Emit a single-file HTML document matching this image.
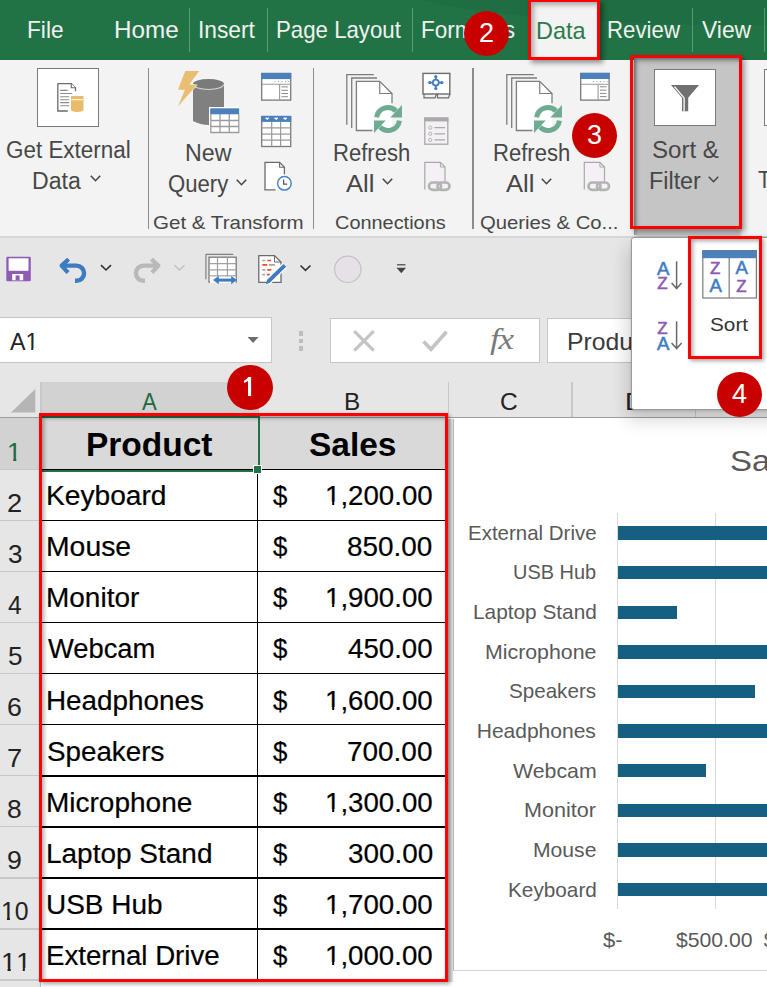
<!DOCTYPE html><html><head><meta charset="utf-8"><style>
html,body{margin:0;padding:0;}
body{width:767px;height:987px;overflow:hidden;position:relative;background:#fff;font-family:"Liberation Sans",sans-serif;}
.r{position:absolute;}
.t{position:absolute;white-space:nowrap;}
.badge{background:#c80000;border-radius:50%;}
.o1{position:relative;}
.o1::before,.o1::after{content:'';position:absolute;bottom:0.16em;height:0.16em;background:var(--bg);}
.o1::before{left:0.04em;width:0.21em;}
.o1::after{left:0.341em;width:0.2em;}
</style></head><body>
<div class="r" style="left:0px;top:59.5px;width:767px;height:177px;background:#f3f3f3;"></div>
<div class="r" style="left:0px;top:0px;width:767px;height:59.5px;background:#217346;"></div>
<div class="r" style="left:380px;top:-70px;width:700px;height:95px;border-radius:50%;background:rgba(0,0,0,.05)"></div>
<div class="t" style="left:27.08px;top:16.00px;font-size:24px;line-height:27px;color:#f1f1f1;font-family:'Liberation Sans', sans-serif;font-weight:400;transform:scaleX(0.9456);transform-origin:0 0;">File</div>
<div class="t" style="left:113.86px;top:16.00px;font-size:24px;line-height:27px;color:#f1f1f1;font-family:'Liberation Sans', sans-serif;font-weight:400;transform:scaleX(1.0105);transform-origin:0 0;">Home</div>
<div class="t" style="left:197.95px;top:16.00px;font-size:24px;line-height:27px;color:#f1f1f1;font-family:'Liberation Sans', sans-serif;font-weight:400;transform:scaleX(0.9477);transform-origin:0 0;">Insert</div>
<div class="t" style="left:275.72px;top:16.00px;font-size:24px;line-height:27px;color:#f1f1f1;font-family:'Liberation Sans', sans-serif;font-weight:400;transform:scaleX(0.9268);transform-origin:0 0;">Page Layout</div>
<div class="t" style="left:421.39px;top:16.00px;font-size:24px;line-height:27px;color:#f1f1f1;font-family:'Liberation Sans', sans-serif;font-weight:400;transform:scaleX(0.9402);transform-origin:0 0;">Formulas</div>
<div class="t" style="left:607.22px;top:16.00px;font-size:24px;line-height:27px;color:#f1f1f1;font-family:'Liberation Sans', sans-serif;font-weight:400;transform:scaleX(0.9271);transform-origin:0 0;">Review</div>
<div class="t" style="left:701.89px;top:16.00px;font-size:24px;line-height:27px;color:#f1f1f1;font-family:'Liberation Sans', sans-serif;font-weight:400;transform:scaleX(0.9518);transform-origin:0 0;">View</div>
<div class="r" style="left:188.5px;top:8px;width:1px;height:44px;background:rgba(255,255,255,0.28);"></div>
<div class="r" style="left:266.6px;top:8px;width:1px;height:44px;background:rgba(255,255,255,0.28);"></div>
<div class="r" style="left:411.9px;top:8px;width:1px;height:44px;background:rgba(255,255,255,0.28);"></div>
<div class="r" style="left:692px;top:8px;width:1px;height:44px;background:rgba(255,255,255,0.28);"></div>
<div class="r" style="left:763.6px;top:8px;width:1px;height:44px;background:rgba(255,255,255,0.28);"></div>
<div class="r" style="left:527.5px;top:0px;width:72.5px;height:60px;background:#f3f3f3;"></div>
<div class="t" style="left:535.92px;top:17.00px;font-size:24px;line-height:27px;color:#2a7a4b;font-family:'Liberation Sans', sans-serif;font-weight:400;transform:scaleX(0.9770);transform-origin:0 0;">Data</div>
<div class="r" style="left:527.5px;top:-1px;width:72.5px;height:61px;background:transparent;border:3.3px solid #ff0000;box-sizing:border-box;box-shadow:3px 3px 5px rgba(0,0,0,.4), inset 3px 3px 5px rgba(0,0,0,.3);"></div>
<div class="r" style="left:0px;top:236px;width:767px;height:1.5px;background:#d6d6d6;"></div>
<div class="r" style="left:147.7px;top:68px;width:1.3px;height:161px;background:#8c8c8c;"></div>
<div class="r" style="left:313px;top:68px;width:1.3px;height:161px;background:#8c8c8c;"></div>
<div class="r" style="left:472.3px;top:68px;width:1.3px;height:161px;background:#8c8c8c;"></div>
<div class="r" style="left:37px;top:68px;width:62px;height:59px;background:#fff;border:1.5px solid #7a7a7a;box-sizing:border-box;"></div>
<svg class="r" style="left:55px;top:82px;" width="32" height="32" viewBox="0 0 32 32"><path d="M2.8 1.6h13.5l4.2 4.2v3.5" fill="none" stroke="#6b6b6b" stroke-width="1.3"/>
<path d="M2.8 1.6v27.4h10" fill="none" stroke="#6b6b6b" stroke-width="1.3"/>
<path d="M16.3 1.6v4.2h4.2" fill="#fff" stroke="#6b6b6b" stroke-width="1.1"/>
<g stroke="#8a8a8a" stroke-width="1.1"><path d="M5.2 8.4h7.5M5.2 11.5h12M5.2 14.7h9M5.2 17.7h9M5.2 20.6h9M5.2 23.8h9"/></g>
<path d="M16 14h12.5v14.5q-6.25 3-12.5 0z" fill="#e9bc6c"/><path d="M16.5 17.7h11.5" stroke="#fff" stroke-width="1"/></svg>
<div class="t" style="left:5.88px;top:137.00px;font-size:23.5px;line-height:26px;color:#474747;font-family:'Liberation Sans', sans-serif;font-weight:400;transform:scaleX(0.9543);transform-origin:0 0;">Get External</div>
<div class="t" style="left:31.85px;top:168.00px;font-size:23.5px;line-height:26px;color:#474747;font-family:'Liberation Sans', sans-serif;font-weight:400;transform:scaleX(0.9831);transform-origin:0 0;">Data</div>
<svg class="r" style="left:88.8px;top:174.4px;" width="13" height="8.5" viewBox="0 0 13 8.5"><path d="M1.8 1.8L6.5 6.7L11.2 1.8" fill="none" stroke="#474747" stroke-width="1.6"/></svg>
<svg class="r" style="left:170px;top:65px;" width="80" height="75" viewBox="0 0 80 75"><path d="M23 19v37q15.5 8 31 0v-37z" fill="#808080"/><ellipse cx="38.5" cy="19" rx="15.5" ry="5" fill="#7a7a7a"/><path d="M23.5 19.5a15 5 0 0 0 30 0" fill="none" stroke="#d6d6d6" stroke-width="1.1"/>
<path d="M15.3 6h13.8l-9.7 13.2 7.1 1.1-18.5 21.3 6.8-16.6-6.8-.6z" fill="#e9be72" stroke="#f3f3f3" stroke-width="1.2" paint-order="stroke"/>
<rect x="39" y="42" width="31" height="26" fill="#fff"/>
<rect x="40.2" y="43.3" width="29" height="6" fill="#4a80bb"/>
<path d="M40.8 49v18.5h28v-18.5M40.8 55.5h28M40.8 61.5h28M50 49v18.5M59.3 49v18.5" fill="none" stroke="#9c9c9c" stroke-width="1.3"/></svg>
<div class="t" style="left:185.14px;top:140.00px;font-size:23.5px;line-height:26px;color:#474747;font-family:'Liberation Sans', sans-serif;font-weight:400;transform:scaleX(0.9881);transform-origin:0 0;">New</div>
<div class="t" style="left:168.10px;top:171.00px;font-size:23.5px;line-height:26px;color:#474747;font-family:'Liberation Sans', sans-serif;font-weight:400;transform:scaleX(0.9416);transform-origin:0 0;">Query</div>
<svg class="r" style="left:235.3px;top:177.6px;" width="13" height="8.5" viewBox="0 0 13 8.5"><path d="M1.8 1.8L6.5 6.7L11.2 1.8" fill="none" stroke="#474747" stroke-width="1.6"/></svg>
<svg class="r" style="left:259px;top:70px;" width="36" height="125" viewBox="0 0 36 125">
<rect x="2.7" y="3.5" width="29" height="26.6" fill="#fff" stroke="#7a7a7a" stroke-width="1.3"/>
<rect x="2.2" y="2.9" width="30" height="6.2" fill="#4a80bb"/>
<path d="M3 14.3h28.6M20.6 14.3v15.7" stroke="#9a9a9a" stroke-width="1.1"/>
<g fill="#9a9a9a"><circle cx="16" cy="11.6" r=".6"/><circle cx="19.5" cy="11.6" r=".6"/><circle cx="23" cy="11.6" r=".6"/><circle cx="26.5" cy="11.6" r=".6"/><circle cx="29.5" cy="11.6" r=".6"/></g>
<path d="M22.4 16.9h6.5M22.4 20.3h6.5M22.4 23.5h6.5M22.4 26.7h6.5" stroke="#8a8a8a" stroke-width="1"/>
<rect x="2.7" y="46.5" width="29" height="30" fill="#fff" stroke="#7a7a7a" stroke-width="1.3"/>
<rect x="2.2" y="45.9" width="30" height="6" fill="#4a80bb"/>
<path d="M6.5 48h3.4l-1.7 1.7zM15.5 48h3.4l-1.7 1.7zM24.5 48h3.4l-1.7 1.7z" fill="#fff" stroke="#fff" stroke-width=".8"/>
<path d="M3 57.9h28.6M3 64.1h28.6M3 70.2h28.6M12.7 52v24.5M21.6 52v24.5" stroke="#9a9a9a" stroke-width="1.2"/>
<path d="M6 92.4h14.6l4.8 4.8v22.6h-19.4z" fill="#fff"/><path d="M16.5 119.8h-10.5v-27.4h14.6l4.8 4.8v7" fill="none" stroke="#6b6b6b" stroke-width="1.3"/>
<path d="M20.6 92.4v4.8h4.8" fill="none" stroke="#6b6b6b" stroke-width="1.1"/>
<circle cx="25.4" cy="113.3" r="6.8" fill="#fff" stroke="#4a86c5" stroke-width="1.5"/>
<path d="M24.6 109.5v4.6h3.6" fill="none" stroke="#555" stroke-width="1.2"/>
</svg>
<div class="t" style="left:152.97px;top:212.00px;font-size:19px;line-height:21px;color:#474747;font-family:'Liberation Sans', sans-serif;font-weight:400;transform:scaleX(1.0810);transform-origin:0 0;">Get & Transform</div>
<svg class="r" style="left:340px;top:70px;" width="66" height="68" viewBox="0 0 66 68">
<path d="M6.8 54.8V4.6h27" fill="none" stroke="#7d7d7d" stroke-width="1.3"/>
<path d="M11.7 58V8h25.3" fill="none" stroke="#7d7d7d" stroke-width="1.3"/>
<path d="M16.4 60.5V11.4h23.3l12.3 12.1v37h-35.6z" fill="#fff"/>
<path d="M32.4 60.5h-16V11.4h23.3l12.3 12.1v9.8" fill="none" stroke="#7d7d7d" stroke-width="1.3"/>
<path d="M39.7 11.4v12.1h12.3" fill="none" stroke="#7d7d7d" stroke-width="1.2"/>
<circle cx="48" cy="49" r="15" fill="#fff" opacity=".0"/>
<g fill="none" stroke="#6fab92" stroke-width="5">
<path d="M36.6 47.4A11.5 11.5 0 0 1 56.1 40.9"/><path d="M59.4 50.6A11.5 11.5 0 0 1 39.9 57.1"/></g>
<path d="M62 35.1V47.4H50.3z" fill="#6fab92"/><path d="M34 62.9V50.6H45.7z" fill="#6fab92"/>
</svg>
<div class="t" style="left:333.14px;top:140.00px;font-size:23.5px;line-height:26px;color:#474747;font-family:'Liberation Sans', sans-serif;font-weight:400;transform:scaleX(0.9386);transform-origin:0 0;">Refresh</div>
<div class="t" style="left:346.40px;top:171.00px;font-size:23.5px;line-height:26px;color:#474747;font-family:'Liberation Sans', sans-serif;font-weight:400;transform:scaleX(1.0913);transform-origin:0 0;">All</div>
<svg class="r" style="left:380.6px;top:177.4px;" width="13" height="8.5" viewBox="0 0 13 8.5"><path d="M1.8 1.8L6.5 6.7L11.2 1.8" fill="none" stroke="#474747" stroke-width="1.6"/></svg>
<svg class="r" style="left:415px;top:65px;" width="45" height="135" viewBox="0 0 45 135">
<rect x="8" y="8.4" width="26.8" height="20.6" fill="#fff" stroke="#6b6b6b" stroke-width="1.4"/>
<path d="M9 29v3.8h11l1.5-3.8M22.5 29v3.8h11l1.5-3.8" fill="none" stroke="#6b6b6b" stroke-width="1.2"/>
<path d="M20.8 11.5v12.5M14.6 17.6h12.5" stroke="#3f7cc0" stroke-width="1.6"/>
<circle cx="20.8" cy="17.6" r="3" fill="#fff" stroke="#3f7cc0" stroke-width="1.8"/>
<circle cx="20.8" cy="11.7" r="1.6" fill="#3f7cc0"/><circle cx="20.8" cy="23.5" r="1.6" fill="#3f7cc0"/><circle cx="14.7" cy="17.6" r="1.6" fill="#3f7cc0"/><circle cx="26.9" cy="17.6" r="1.6" fill="#3f7cc0"/>
<rect x="9.8" y="53" width="23" height="26.2" fill="#f4f0f5" stroke="#a9a9a9" stroke-width="1.3"/>
<rect x="9.2" y="52.6" width="24.2" height="3.8" fill="#a9a9a9"/>
<path d="M19.5 62.6h10.5M19.5 68.8h10.5M19.5 74.9h10.5" stroke="#a9a9a9" stroke-width="1.2"/>
<g fill="none" stroke="#b3b3b3" stroke-width="1"><circle cx="15.3" cy="62.6" r="1.6"/><circle cx="15.3" cy="68.8" r="1.6"/><circle cx="15.3" cy="74.9" r="1.6"/></g>
<path d="M9.8 124.5V97.4h15.6l4.6 4.6v14" fill="#f4f0f5" stroke="#a9a9a9" stroke-width="1.2"/>
<path d="M25.4 97.4v4.6h4.6" fill="none" stroke="#a9a9a9" stroke-width="1"/>
<g fill="none" stroke="#b3b3b3" stroke-width="2.6"><rect x="14" y="117.5" width="12" height="7.4" rx="3.7"/><rect x="22.5" y="117.5" width="12" height="7.4" rx="3.7"/></g>
</svg>
<div class="t" style="left:335.00px;top:212.00px;font-size:19px;line-height:21px;color:#474747;font-family:'Liberation Sans', sans-serif;font-weight:400;transform:scaleX(1.0478);transform-origin:0 0;">Connections</div>
<svg class="r" style="left:499.5px;top:70px;" width="66" height="68" viewBox="0 0 66 68">
<path d="M6.8 54.8V4.6h27" fill="none" stroke="#7d7d7d" stroke-width="1.3"/>
<path d="M11.7 58V8h25.3" fill="none" stroke="#7d7d7d" stroke-width="1.3"/>
<path d="M16.4 60.5V11.4h23.3l12.3 12.1v37h-35.6z" fill="#fff"/>
<path d="M32.4 60.5h-16V11.4h23.3l12.3 12.1v9.8" fill="none" stroke="#7d7d7d" stroke-width="1.3"/>
<path d="M39.7 11.4v12.1h12.3" fill="none" stroke="#7d7d7d" stroke-width="1.2"/>
<circle cx="48" cy="49" r="15" fill="#fff" opacity=".0"/>
<g fill="none" stroke="#6fab92" stroke-width="5">
<path d="M36.6 47.4A11.5 11.5 0 0 1 56.1 40.9"/><path d="M59.4 50.6A11.5 11.5 0 0 1 39.9 57.1"/></g>
<path d="M62 35.1V47.4H50.3z" fill="#6fab92"/><path d="M34 62.9V50.6H45.7z" fill="#6fab92"/>
</svg>
<div class="t" style="left:492.64px;top:140.00px;font-size:23.5px;line-height:26px;color:#474747;font-family:'Liberation Sans', sans-serif;font-weight:400;transform:scaleX(0.9386);transform-origin:0 0;">Refresh</div>
<div class="t" style="left:505.90px;top:171.00px;font-size:23.5px;line-height:26px;color:#474747;font-family:'Liberation Sans', sans-serif;font-weight:400;transform:scaleX(1.0913);transform-origin:0 0;">All</div>
<svg class="r" style="left:540.1px;top:177.4px;" width="13" height="8.5" viewBox="0 0 13 8.5"><path d="M1.8 1.8L6.5 6.7L11.2 1.8" fill="none" stroke="#474747" stroke-width="1.6"/></svg>
<svg class="r" style="left:575px;top:65px;" width="45" height="40" viewBox="0 0 45 40">
<rect x="5.7" y="8.5" width="28.4" height="26.6" fill="#fff" stroke="#7a7a7a" stroke-width="1.3"/>
<rect x="5.2" y="7.8" width="29.4" height="6.2" fill="#4a80bb"/>
<path d="M6 19.2h27.6M23.1 19.2v15.7" stroke="#9a9a9a" stroke-width="1.1"/>
<g fill="#9a9a9a"><circle cx="18.5" cy="16.6" r=".6"/><circle cx="22" cy="16.6" r=".6"/><circle cx="25.5" cy="16.6" r=".6"/><circle cx="29" cy="16.6" r=".6"/><circle cx="32" cy="16.6" r=".6"/></g>
<path d="M25 21.8h6.5M25 25.2h6.5M25 28.4h6.5M25 31.6h6.5" stroke="#8a8a8a" stroke-width="1"/></svg>
<svg class="r" style="left:575px;top:155px;" width="45" height="45" viewBox="0 0 45 45">
<path d="M9.3 34.5V7.4h15.6l4.6 4.6v14" fill="#f4f0f5" stroke="#a9a9a9" stroke-width="1.2"/>
<path d="M24.9 7.4v4.6h4.6" fill="none" stroke="#a9a9a9" stroke-width="1"/>
<g fill="none" stroke="#b3b3b3" stroke-width="2.6"><rect x="13.5" y="27.5" width="12" height="7.4" rx="3.7"/><rect x="22" y="27.5" width="12" height="7.4" rx="3.7"/></g></svg>
<div class="t" style="left:480.09px;top:212.00px;font-size:19px;line-height:21px;color:#474747;font-family:'Liberation Sans', sans-serif;font-weight:400;transform:scaleX(1.0660);transform-origin:0 0;">Queries & Co...</div>
<div class="r" style="left:633.5px;top:57px;width:105px;height:178px;background:#c5c5c5;box-shadow:inset 2px 2px 3px rgba(0,0,0,0.25), 2px 2px 3px rgba(0,0,0,0.2);"></div>
<div class="r" style="left:654.4px;top:68.7px;width:61.4px;height:57.7px;background:#fff;border:1.5px solid #7a7a7a;box-sizing:border-box;"></div>
<svg class="r" style="left:665px;top:80px;" width="40" height="36" viewBox="0 0 40 36"><path d="M6 5h28l-10.8 12.7v13.5h-6.2v-13.5z" fill="#707070"/><path d="M9.5 6.6l9.6 11.3v13.3" fill="none" stroke="#fff" stroke-width="1.3"/></svg>
<div class="t" style="left:652.42px;top:137.00px;font-size:23.5px;line-height:26px;color:#474747;font-family:'Liberation Sans', sans-serif;font-weight:400;transform:scaleX(1.0250);transform-origin:0 0;">Sort &amp;</div>
<div class="t" style="left:648.93px;top:168.00px;font-size:23.5px;line-height:26px;color:#474747;font-family:'Liberation Sans', sans-serif;font-weight:400;transform:scaleX(0.9932);transform-origin:0 0;">Filter</div>
<svg class="r" style="left:707px;top:175px;" width="13" height="8.5" viewBox="0 0 13 8.5"><path d="M1.8 1.8L6.5 6.7L11.2 1.8" fill="none" stroke="#474747" stroke-width="1.6"/></svg>
<div class="r" style="left:629.5px;top:54.5px;width:112px;height:174px;background:transparent;border:3.6px solid #ff0000;box-sizing:border-box;box-shadow:3px 3px 5px rgba(0,0,0,.35), inset 3px 3px 5px rgba(0,0,0,.3);"></div>
<div class="r" style="left:764px;top:68.7px;width:10px;height:57.7px;background:#fff;border:1.5px solid #7a7a7a;box-sizing:border-box;"></div>
<div class="t" style="left:757.58px;top:167.00px;font-size:23.5px;line-height:26px;color:#474747;font-family:'Liberation Sans', sans-serif;font-weight:400;transform:scaleX(0.8959);transform-origin:0 0;">T</div>
<div class="r" style="left:0px;top:237.5px;width:767px;height:145px;background:#e6e6e6;"></div>
<svg class="r" style="left:0px;top:248px;" width="420" height="45" viewBox="0 0 420 45">
<rect x="6.3" y="8.7" width="24.5" height="24.6" rx="1.2" fill="#8e5bb5"/>
<rect x="8.6" y="10.3" width="19.9" height="12.5" fill="#fff"/>
<rect x="12.2" y="26" width="11" height="6.3" fill="#fff"/><rect x="15.6" y="27.4" width="4" height="5" fill="#8e5bb5"/>
<path d="M61.5 17.6H76.5A7.6 7.6 0 0 1 76.5 32.8H75" fill="none" stroke="#3d7cc0" stroke-width="4.4"/>
<path d="M68.6 11.2L61.6 17.6L68 24.6" fill="none" stroke="#3d7cc0" stroke-width="4.2" stroke-linejoin="round"/>
<path d="M101 17.2l5 4.8 5-4.8" fill="none" stroke="#333" stroke-width="1.6"/>
<path d="M158.5 17.6H143.5A7.6 7.6 0 0 0 143.5 32.8H145" fill="none" stroke="#b9b9b9" stroke-width="4.4"/>
<path d="M151.4 11.2L158.4 17.6L152 24.6" fill="none" stroke="#b9b9b9" stroke-width="4.2" stroke-linejoin="round"/>
<path d="M174.5 17.2l5 4.8 5-4.8" fill="none" stroke="#c0c0c0" stroke-width="1.4"/>
<path d="M205.9 6.3H233.2M205.9 6.3V31.3" fill="none" stroke="#808080" stroke-width="1.2"/>
<rect x="209" y="9.2" width="27.2" height="24.9" fill="#fff" stroke="#7a7a7a" stroke-width="1.3"/>
<path d="M217.5 9.5v24.5M227.4 9.5v24.5M209.5 15.6h26.3M209.5 21.9h26.3M209.5 27.9h26.3" stroke="#a0a0a0" stroke-width="1.2"/>
<rect x="210" y="28.8" width="25.5" height="6.2" fill="#fff"/>
<path d="M217 32.1H233" stroke="#3d7cc0" stroke-width="3"/>
<path d="M213 32.1l5.8-4.2v8.4zM237 32.1l-5.8-4.2v8.4z" fill="#3d7cc0"/>
<path d="M258.8 7.6H274.5L281 14V34.3H258.8Z" fill="#fff" stroke="#6b6b6b" stroke-width="1.3"/>
<path d="M274.5 7.6V14H281" fill="none" stroke="#6b6b6b" stroke-width="1"/>
<g stroke-width="1.6"><path d="M262.3 12.5h3M262.3 21.9h3M262.3 26.6h2.6M269 16.9h6" stroke="#a6a6a6"/><path d="M267.3 12.5h3.8M262.3 16.9h5M267.3 21.9h4M266.8 26.6h3" stroke="#e0532a"/></g>
<path d="M267.2 34.6L284.8 17.4" stroke="#fff" stroke-width="6.4"/>
<path d="M268.4 33.4L284.8 17.4" stroke="#3d7cc0" stroke-width="4"/>
<path d="M266 36l1-4.6 3.4 3.4z" fill="#3d7cc0"/>
<path d="M300.5 17.5l5 4.8 5-4.8" fill="none" stroke="#333" stroke-width="1.6"/>
<circle cx="347.8" cy="21.3" r="13.2" fill="#e5e1e6" stroke="#c4c4c4" stroke-width="1.2"/>
<path d="M397 16.8h8.5" stroke="#444" stroke-width="1.2"/><path d="M396.5 19.8h9.5l-4.75 5.5z" fill="#444"/>
</svg>
<div class="r" style="left:0px;top:317.2px;width:272px;height:45.4px;background:#fff;border:1.2px solid #c6c6c6;border-left:none;box-sizing:border-box;"></div>
<div class="t" style="left:10.00px;top:329.00px;font-size:23px;line-height:26px;color:#222;font-family:'Liberation Sans', sans-serif;font-weight:400;transform:scaleX(1.0102);transform-origin:0 0;">A<span class="o1" style="--bg:#fff">1</span></div>
<svg class="r" style="left:245px;top:334px;" width="16" height="12" viewBox="0 0 16 12"><path d="M2.6 3h11l-5.5 6z" fill="#6d6d6d"/></svg>
<div class="r" style="left:298.6px;top:331px;width:4.6px;height:4.6px;background:#bdbdbd;"></div>
<div class="r" style="left:298.6px;top:338.5px;width:4.6px;height:4.6px;background:#bdbdbd;"></div>
<div class="r" style="left:298.6px;top:346px;width:4.6px;height:4.6px;background:#bdbdbd;"></div>
<div class="r" style="left:329.9px;top:317.5px;width:210.5px;height:45px;background:#fff;border:1.2px solid #c6c6c6;box-sizing:border-box;"></div>
<svg class="r" style="left:350px;top:327px;" width="30" height="27" viewBox="0 0 30 27"><path d="M4.2 4.2l19.5 19.5M23.7 4.2l-19.5 19.5" stroke="#c4c4c4" stroke-width="3.2"/></svg>
<svg class="r" style="left:420px;top:327px;" width="30" height="27" viewBox="0 0 30 27"><path d="M3.5 14.5l7.5 7.8 15.5-17.5" fill="none" stroke="#c4c4c4" stroke-width="3.6"/></svg>
<div class="t" style="left:490.05px;top:323.00px;font-size:29px;line-height:32px;color:#7a7a7a;font-family:'Liberation Serif', serif;font-weight:400;font-style:italic;transform:scaleX(1.2032);transform-origin:0 0;letter-spacing:-1px;">fx</div>
<div class="r" style="left:546.6px;top:318px;width:230px;height:45px;background:#fff;border:1.2px solid #c6c6c6;box-sizing:border-box;"></div>
<div class="t" style="left:566.72px;top:328.00px;font-size:24px;line-height:27px;color:#3a3a3a;font-family:'Liberation Sans', sans-serif;font-weight:400;transform:scaleX(1.0301);transform-origin:0 0;">Produ</div>
<div class="r" style="left:0px;top:382.4px;width:767px;height:35.6px;background:#e6e6e6;"></div>
<div class="r" style="left:41px;top:382.4px;width:217px;height:35.6px;background:#d2d2d2;"></div>
<svg class="r" style="left:0px;top:382px;" width="41" height="36" viewBox="0 0 41 36"><path d="M35.3 7v23.6H11z" fill="#b5b5b5"/></svg>
<div class="r" style="left:0px;top:417px;width:767px;height:1.4px;background:#9e9e9e;"></div>
<div class="r" style="left:40.4px;top:382.4px;width:1.2px;height:35px;background:#c8c8c8;"></div>
<div class="r" style="left:257.6px;top:382.4px;width:1.2px;height:35px;background:#c8c8c8;"></div>
<div class="r" style="left:447.6px;top:382.4px;width:1.2px;height:35px;background:#c8c8c8;"></div>
<div class="r" style="left:571.4px;top:382.4px;width:1.2px;height:35px;background:#c8c8c8;"></div>
<div class="r" style="left:695px;top:382.4px;width:1.2px;height:35px;background:#c8c8c8;"></div>
<div class="t" style="left:142.30px;top:389.00px;font-size:23px;line-height:26px;color:#1e6b41;font-family:'Liberation Sans', sans-serif;font-weight:400;transform:scaleX(0.9611);transform-origin:0 0;">A</div>
<div class="t" style="left:344.26px;top:389.00px;font-size:23px;line-height:26px;color:#222;font-family:'Liberation Sans', sans-serif;font-weight:400;transform:scaleX(1.0565);transform-origin:0 0;">B</div>
<div class="t" style="left:500.37px;top:389.00px;font-size:23px;line-height:26px;color:#222;font-family:'Liberation Sans', sans-serif;font-weight:400;transform:scaleX(1.0681);transform-origin:0 0;">C</div>
<div class="t" style="left:624.55px;top:389.00px;font-size:23px;line-height:26px;color:#222;font-family:'Liberation Sans', sans-serif;font-weight:400;transform:scaleX(1.1692);transform-origin:0 0;">D</div>
<div class="r" style="left:0px;top:418.4px;width:40.4px;height:569px;background:#e6e6e6;"></div>
<div class="r" style="left:0px;top:418.4px;width:40.4px;height:51.06px;background:#d2d2d2;"></div>
<div class="r" style="left:40.4px;top:418.4px;width:218px;height:569px;background:#fff;"></div>
<div class="r" style="left:258px;top:418.4px;width:190px;height:569px;background:#fff;"></div>
<div class="r" style="left:447px;top:418.4px;width:320px;height:569px;background:#fff;"></div>
<div class="r" style="left:39.6px;top:418.4px;width:1.2px;height:569px;background:#bcbcbc;"></div>
<div class="r" style="left:0px;top:468.85999999999996px;width:40.4px;height:1.2px;background:#c8c8c8;"></div>
<div class="r" style="left:0px;top:519.92px;width:40.4px;height:1.2px;background:#c8c8c8;"></div>
<div class="r" style="left:0px;top:570.9799999999999px;width:40.4px;height:1.2px;background:#c8c8c8;"></div>
<div class="r" style="left:0px;top:622.04px;width:40.4px;height:1.2px;background:#c8c8c8;"></div>
<div class="r" style="left:0px;top:673.1px;width:40.4px;height:1.2px;background:#c8c8c8;"></div>
<div class="r" style="left:0px;top:724.16px;width:40.4px;height:1.2px;background:#c8c8c8;"></div>
<div class="r" style="left:0px;top:775.2199999999999px;width:40.4px;height:1.2px;background:#c8c8c8;"></div>
<div class="r" style="left:0px;top:826.28px;width:40.4px;height:1.2px;background:#c8c8c8;"></div>
<div class="r" style="left:0px;top:877.34px;width:40.4px;height:1.2px;background:#c8c8c8;"></div>
<div class="r" style="left:0px;top:928.4px;width:40.4px;height:1.2px;background:#c8c8c8;"></div>
<div class="r" style="left:0px;top:979.46px;width:40.4px;height:1.2px;background:#c8c8c8;"></div>
<div class="r" style="left:41px;top:418.4px;width:404px;height:51.06px;background:#d9d9d9;"></div>
<div class="t" style="left:7.25px;top:438.00px;font-size:25px;line-height:28px;color:#1e6b41;font-family:'Liberation Sans', sans-serif;font-weight:400;transform:scaleX(1.0391);transform-origin:0 0;"><span class="o1" style="--bg:#d2d2d2">1</span></div>
<div class="t" style="left:7.24px;top:489.00px;font-size:25px;line-height:28px;color:#222;font-family:'Liberation Sans', sans-serif;font-weight:400;transform:scaleX(1.0901);transform-origin:0 0;">2</div>
<div class="t" style="left:7.56px;top:540.00px;font-size:25px;line-height:28px;color:#222;font-family:'Liberation Sans', sans-serif;font-weight:400;transform:scaleX(1.0442);transform-origin:0 0;">3</div>
<div class="t" style="left:8.11px;top:591.00px;font-size:25px;line-height:28px;color:#222;font-family:'Liberation Sans', sans-serif;font-weight:400;transform:scaleX(0.9822);transform-origin:0 0;">4</div>
<div class="t" style="left:7.56px;top:642.00px;font-size:25px;line-height:28px;color:#222;font-family:'Liberation Sans', sans-serif;font-weight:400;transform:scaleX(1.0442);transform-origin:0 0;">5</div>
<div class="t" style="left:7.27px;top:693.00px;font-size:25px;line-height:28px;color:#222;font-family:'Liberation Sans', sans-serif;font-weight:400;transform:scaleX(1.0667);transform-origin:0 0;">6</div>
<div class="t" style="left:7.24px;top:744.00px;font-size:25px;line-height:28px;color:#222;font-family:'Liberation Sans', sans-serif;font-weight:400;transform:scaleX(1.0901);transform-origin:0 0;">7</div>
<div class="t" style="left:7.41px;top:795.00px;font-size:25px;line-height:28px;color:#222;font-family:'Liberation Sans', sans-serif;font-weight:400;transform:scaleX(1.0553);transform-origin:0 0;">8</div>
<div class="t" style="left:7.40px;top:846.00px;font-size:25px;line-height:28px;color:#222;font-family:'Liberation Sans', sans-serif;font-weight:400;transform:scaleX(1.0667);transform-origin:0 0;">9</div>
<div class="t" style="left:1.34px;top:897.00px;font-size:25px;line-height:28px;color:#222;font-family:'Liberation Sans', sans-serif;font-weight:400;transform:scaleX(0.9920);transform-origin:0 0;"><span class="o1" style="--bg:#e6e6e6">1</span>0</div>
<div class="t" style="left:1.17px;top:948.00px;font-size:25px;line-height:28px;color:#222;font-family:'Liberation Sans', sans-serif;font-weight:400;transform:scaleX(1.0842);transform-origin:0 0;"><span class="o1" style="--bg:#e6e6e6">1</span><span class="o1" style="--bg:#e6e6e6">1</span></div>
<div class="r" style="left:41px;top:468.76px;width:404px;height:1.4px;background:#000;"></div>
<div class="r" style="left:41px;top:519.8199999999999px;width:404px;height:1.4px;background:#000;"></div>
<div class="r" style="left:41px;top:570.8799999999999px;width:404px;height:1.4px;background:#000;"></div>
<div class="r" style="left:41px;top:621.9399999999999px;width:404px;height:1.4px;background:#000;"></div>
<div class="r" style="left:41px;top:673.0px;width:404px;height:1.4px;background:#000;"></div>
<div class="r" style="left:41px;top:724.06px;width:404px;height:1.4px;background:#000;"></div>
<div class="r" style="left:41px;top:775.1199999999999px;width:404px;height:1.4px;background:#000;"></div>
<div class="r" style="left:41px;top:826.18px;width:404px;height:1.4px;background:#000;"></div>
<div class="r" style="left:41px;top:877.24px;width:404px;height:1.4px;background:#000;"></div>
<div class="r" style="left:41px;top:928.3px;width:404px;height:1.4px;background:#000;"></div>
<div class="r" style="left:256.8px;top:469.46px;width:1.5px;height:510.6px;background:#000;"></div>
<div class="t" style="left:86.03px;top:426.00px;font-size:33px;line-height:37px;color:#000;font-family:'Liberation Sans', sans-serif;font-weight:700;transform:scaleX(1.0139);transform-origin:0 0;">Product</div>
<div class="t" style="left:309.30px;top:426.00px;font-size:33px;line-height:37px;color:#000;font-family:'Liberation Sans', sans-serif;font-weight:700;transform:scaleX(1.0141);transform-origin:0 0;">Sales</div>
<div class="t" style="left:45.65px;top:481.00px;font-size:27px;line-height:30px;color:#000;font-family:'Liberation Sans', sans-serif;font-weight:400;transform:scaleX(1.0426);transform-origin:0 0;-webkit-text-stroke:0.2px #000;">Keyboard</div>
<div class="t" style="left:272.84px;top:481.00px;font-size:27px;line-height:30px;color:#000;font-family:'Liberation Sans', sans-serif;font-weight:400;transform:scaleX(0.9574);transform-origin:0 0;-webkit-text-stroke:0.2px #000;">$</div>
<div class="t" style="left:325.12px;top:481.00px;font-size:27px;line-height:30px;color:#000;font-family:'Liberation Sans', sans-serif;font-weight:400;transform:scaleX(1.0249);transform-origin:0 0;-webkit-text-stroke:0.2px #000;"><span class="o1" style="--bg:#fff">1</span>,200.00</div>
<div class="t" style="left:45.63px;top:532.00px;font-size:27px;line-height:30px;color:#000;font-family:'Liberation Sans', sans-serif;font-weight:400;transform:scaleX(1.0499);transform-origin:0 0;-webkit-text-stroke:0.2px #000;">Mouse</div>
<div class="t" style="left:272.84px;top:532.00px;font-size:27px;line-height:30px;color:#000;font-family:'Liberation Sans', sans-serif;font-weight:400;transform:scaleX(0.9574);transform-origin:0 0;-webkit-text-stroke:0.2px #000;">$</div>
<div class="t" style="left:347.45px;top:532.00px;font-size:27px;line-height:30px;color:#000;font-family:'Liberation Sans', sans-serif;font-weight:400;transform:scaleX(1.0328);transform-origin:0 0;-webkit-text-stroke:0.2px #000;">850.00</div>
<div class="t" style="left:45.66px;top:583.00px;font-size:27px;line-height:30px;color:#000;font-family:'Liberation Sans', sans-serif;font-weight:400;transform:scaleX(1.0361);transform-origin:0 0;-webkit-text-stroke:0.2px #000;">Monitor</div>
<div class="t" style="left:272.84px;top:583.00px;font-size:27px;line-height:30px;color:#000;font-family:'Liberation Sans', sans-serif;font-weight:400;transform:scaleX(0.9574);transform-origin:0 0;-webkit-text-stroke:0.2px #000;">$</div>
<div class="t" style="left:325.12px;top:583.00px;font-size:27px;line-height:30px;color:#000;font-family:'Liberation Sans', sans-serif;font-weight:400;transform:scaleX(1.0249);transform-origin:0 0;-webkit-text-stroke:0.2px #000;"><span class="o1" style="--bg:#fff">1</span>,900.00</div>
<div class="t" style="left:47.76px;top:634.00px;font-size:27px;line-height:30px;color:#000;font-family:'Liberation Sans', sans-serif;font-weight:400;transform:scaleX(1.0123);transform-origin:0 0;-webkit-text-stroke:0.2px #000;">Webcam</div>
<div class="t" style="left:272.84px;top:634.00px;font-size:27px;line-height:30px;color:#000;font-family:'Liberation Sans', sans-serif;font-weight:400;transform:scaleX(0.9574);transform-origin:0 0;-webkit-text-stroke:0.2px #000;">$</div>
<div class="t" style="left:348.15px;top:634.00px;font-size:27px;line-height:30px;color:#000;font-family:'Liberation Sans', sans-serif;font-weight:400;transform:scaleX(1.0242);transform-origin:0 0;-webkit-text-stroke:0.2px #000;">450.00</div>
<div class="t" style="left:45.67px;top:686.00px;font-size:27px;line-height:30px;color:#000;font-family:'Liberation Sans', sans-serif;font-weight:400;transform:scaleX(1.0314);transform-origin:0 0;-webkit-text-stroke:0.2px #000;">Headphones</div>
<div class="t" style="left:272.84px;top:686.00px;font-size:27px;line-height:30px;color:#000;font-family:'Liberation Sans', sans-serif;font-weight:400;transform:scaleX(0.9574);transform-origin:0 0;-webkit-text-stroke:0.2px #000;">$</div>
<div class="t" style="left:325.12px;top:686.00px;font-size:27px;line-height:30px;color:#000;font-family:'Liberation Sans', sans-serif;font-weight:400;transform:scaleX(1.0249);transform-origin:0 0;-webkit-text-stroke:0.2px #000;"><span class="o1" style="--bg:#fff">1</span>,600.00</div>
<div class="t" style="left:46.65px;top:737.00px;font-size:27px;line-height:30px;color:#000;font-family:'Liberation Sans', sans-serif;font-weight:400;transform:scaleX(1.0285);transform-origin:0 0;-webkit-text-stroke:0.2px #000;">Speakers</div>
<div class="t" style="left:272.84px;top:737.00px;font-size:27px;line-height:30px;color:#000;font-family:'Liberation Sans', sans-serif;font-weight:400;transform:scaleX(0.9574);transform-origin:0 0;-webkit-text-stroke:0.2px #000;">$</div>
<div class="t" style="left:347.30px;top:737.00px;font-size:27px;line-height:30px;color:#000;font-family:'Liberation Sans', sans-serif;font-weight:400;transform:scaleX(1.0345);transform-origin:0 0;-webkit-text-stroke:0.2px #000;">700.00</div>
<div class="t" style="left:45.66px;top:788.00px;font-size:27px;line-height:30px;color:#000;font-family:'Liberation Sans', sans-serif;font-weight:400;transform:scaleX(1.0370);transform-origin:0 0;-webkit-text-stroke:0.2px #000;">Microphone</div>
<div class="t" style="left:272.84px;top:788.00px;font-size:27px;line-height:30px;color:#000;font-family:'Liberation Sans', sans-serif;font-weight:400;transform:scaleX(0.9574);transform-origin:0 0;-webkit-text-stroke:0.2px #000;">$</div>
<div class="t" style="left:325.12px;top:788.00px;font-size:27px;line-height:30px;color:#000;font-family:'Liberation Sans', sans-serif;font-weight:400;transform:scaleX(1.0249);transform-origin:0 0;-webkit-text-stroke:0.2px #000;"><span class="o1" style="--bg:#fff">1</span>,300.00</div>
<div class="t" style="left:45.66px;top:839.00px;font-size:27px;line-height:30px;color:#000;font-family:'Liberation Sans', sans-serif;font-weight:400;transform:scaleX(1.0361);transform-origin:0 0;-webkit-text-stroke:0.2px #000;">Laptop Stand</div>
<div class="t" style="left:272.84px;top:839.00px;font-size:27px;line-height:30px;color:#000;font-family:'Liberation Sans', sans-serif;font-weight:400;transform:scaleX(0.9574);transform-origin:0 0;-webkit-text-stroke:0.2px #000;">$</div>
<div class="t" style="left:347.59px;top:839.00px;font-size:27px;line-height:30px;color:#000;font-family:'Liberation Sans', sans-serif;font-weight:400;transform:scaleX(1.0311);transform-origin:0 0;-webkit-text-stroke:0.2px #000;">300.00</div>
<div class="t" style="left:45.80px;top:890.00px;font-size:27px;line-height:30px;color:#000;font-family:'Liberation Sans', sans-serif;font-weight:400;transform:scaleX(1.0361);transform-origin:0 0;-webkit-text-stroke:0.2px #000;">USB Hub</div>
<div class="t" style="left:272.84px;top:890.00px;font-size:27px;line-height:30px;color:#000;font-family:'Liberation Sans', sans-serif;font-weight:400;transform:scaleX(0.9574);transform-origin:0 0;-webkit-text-stroke:0.2px #000;">$</div>
<div class="t" style="left:325.12px;top:890.00px;font-size:27px;line-height:30px;color:#000;font-family:'Liberation Sans', sans-serif;font-weight:400;transform:scaleX(1.0249);transform-origin:0 0;-webkit-text-stroke:0.2px #000;"><span class="o1" style="--bg:#fff">1</span>,700.00</div>
<div class="t" style="left:45.69px;top:941.00px;font-size:27px;line-height:30px;color:#000;font-family:'Liberation Sans', sans-serif;font-weight:400;transform:scaleX(1.0242);transform-origin:0 0;-webkit-text-stroke:0.2px #000;">External Drive</div>
<div class="t" style="left:272.84px;top:941.00px;font-size:27px;line-height:30px;color:#000;font-family:'Liberation Sans', sans-serif;font-weight:400;transform:scaleX(0.9574);transform-origin:0 0;-webkit-text-stroke:0.2px #000;">$</div>
<div class="t" style="left:325.12px;top:941.00px;font-size:27px;line-height:30px;color:#000;font-family:'Liberation Sans', sans-serif;font-weight:400;transform:scaleX(1.0249);transform-origin:0 0;-webkit-text-stroke:0.2px #000;"><span class="o1" style="--bg:#fff">1</span>,000.00</div>
<div class="r" style="left:39.5px;top:416.2px;width:220.5px;height:55.5px;background:transparent;border:2.8px solid #217346;box-sizing:border-box;"></div>
<div class="r" style="left:252.7px;top:464.7px;width:7.5px;height:7.3px;background:#217346;border:1px solid #fff;box-sizing:content-box;"></div>
<div class="r" style="left:453px;top:418.6px;width:320px;height:552px;background:#fff;border-left:1px solid #b8b8b8;border-bottom:1.2px solid #d4d4d4;box-sizing:border-box;"></div>
<div class="r" style="left:448.4px;top:418.6px;width:4.8px;height:563px;background:linear-gradient(90deg,rgba(0,0,0,.22),rgba(0,0,0,.1));"></div>
<div class="t" style="left:729.82px;top:444.00px;font-size:30px;line-height:33px;color:#595959;font-family:'Liberation Sans', sans-serif;font-weight:400;transform:scaleX(1.0979);transform-origin:0 0;">Sa</div>
<div class="r" style="left:617.3px;top:512.8px;width:1.1px;height:396.5px;background:#d9d9d9;"></div>
<div class="r" style="left:714.9px;top:512.8px;width:1.1px;height:396.5px;background:#d9d9d9;"></div>
<div class="r" style="left:618.4px;top:526.3px;width:194.8px;height:13.6px;background:#156082;"></div>
<div class="t" style="left:467.76px;top:521.00px;font-size:21px;line-height:23px;color:#595959;font-family:'Liberation Sans', sans-serif;font-weight:400;transform:scaleX(0.9748);transform-origin:0 0;">External Drive</div>
<div class="r" style="left:618.4px;top:565.9px;width:331.16px;height:13.6px;background:#156082;"></div>
<div class="t" style="left:513.21px;top:560.00px;font-size:21px;line-height:23px;color:#595959;font-family:'Liberation Sans', sans-serif;font-weight:400;transform:scaleX(0.9489);transform-origin:0 0;">USB Hub</div>
<div class="r" style="left:618.4px;top:605.5px;width:58.44px;height:13.6px;background:#156082;"></div>
<div class="t" style="left:472.94px;top:600.00px;font-size:21px;line-height:23px;color:#595959;font-family:'Liberation Sans', sans-serif;font-weight:400;transform:scaleX(0.9909);transform-origin:0 0;">Laptop Stand</div>
<div class="r" style="left:618.4px;top:645.0999999999999px;width:253.24px;height:13.6px;background:#156082;"></div>
<div class="t" style="left:484.99px;top:640.00px;font-size:21px;line-height:23px;color:#595959;font-family:'Liberation Sans', sans-serif;font-weight:400;transform:scaleX(1.0149);transform-origin:0 0;">Microphone</div>
<div class="r" style="left:618.4px;top:684.6999999999999px;width:136.36px;height:13.6px;background:#156082;"></div>
<div class="t" style="left:509.07px;top:679.00px;font-size:21px;line-height:23px;color:#595959;font-family:'Liberation Sans', sans-serif;font-weight:400;transform:scaleX(0.9811);transform-origin:0 0;">Speakers</div>
<div class="r" style="left:618.4px;top:724.3px;width:311.68px;height:13.6px;background:#156082;"></div>
<div class="t" style="left:476.72px;top:719.00px;font-size:21px;line-height:23px;color:#595959;font-family:'Liberation Sans', sans-serif;font-weight:400;">Headphones</div>
<div class="r" style="left:618.4px;top:763.9px;width:87.66px;height:13.6px;background:#156082;"></div>
<div class="t" style="left:513.09px;top:759.00px;font-size:21px;line-height:23px;color:#595959;font-family:'Liberation Sans', sans-serif;font-weight:400;transform:scaleX(1.0141);transform-origin:0 0;">Webcam</div>
<div class="r" style="left:618.4px;top:803.5px;width:370.12px;height:13.6px;background:#156082;"></div>
<div class="t" style="left:523.98px;top:798.00px;font-size:21px;line-height:23px;color:#595959;font-family:'Liberation Sans', sans-serif;font-weight:400;transform:scaleX(1.0260);transform-origin:0 0;">Monitor</div>
<div class="r" style="left:618.4px;top:843.0999999999999px;width:165.58px;height:13.6px;background:#156082;"></div>
<div class="t" style="left:533.01px;top:838.00px;font-size:21px;line-height:23px;color:#595959;font-family:'Liberation Sans', sans-serif;font-weight:400;transform:scaleX(1.0054);transform-origin:0 0;">Mouse</div>
<div class="r" style="left:618.4px;top:882.7px;width:233.76px;height:13.6px;background:#156082;"></div>
<div class="t" style="left:507.94px;top:878.00px;font-size:21px;line-height:23px;color:#595959;font-family:'Liberation Sans', sans-serif;font-weight:400;transform:scaleX(0.9881);transform-origin:0 0;">Keyboard</div>
<div class="t" style="left:602.58px;top:928.00px;font-size:21px;line-height:23px;color:#595959;font-family:'Liberation Sans', sans-serif;font-weight:400;transform:scaleX(1.0493);transform-origin:0 0;">$-</div>
<div class="t" style="left:675.99px;top:928.00px;font-size:21px;line-height:23px;color:#595959;font-family:'Liberation Sans', sans-serif;font-weight:400;transform:scaleX(1.0084);transform-origin:0 0;">$500.00</div>
<div class="t" style="left:763.79px;top:928.00px;font-size:21px;line-height:23px;color:#595959;font-family:'Liberation Sans', sans-serif;font-weight:400;">$1,000.00</div>
<div class="r" style="left:38.8px;top:413.1px;width:409.6px;height:569.2px;background:transparent;border:3.3px solid #ff0000;box-sizing:border-box;box-shadow:2px 2px 4px rgba(0,0,0,.35), inset 2px 2px 4px rgba(0,0,0,.35);"></div>
<div class="r" style="left:631.2px;top:236.8px;width:160px;height:172.8px;background:#fff;border-radius:3px 0 0 3px;border:1.3px solid #9a9a9a;box-sizing:border-box;box-shadow:-4px 10px 18px rgba(0,0,0,.16), 0 1px 3px rgba(0,0,0,.15);"></div>
<svg class="r" style="left:650px;top:250px;" width="40" height="105" viewBox="0 0 40 105">
<g font-family="Liberation Sans" stroke-width=".55">
<text x="7.1" y="24.9" font-size="18.6" fill="#3f7cc0" stroke="#3f7cc0">A</text>
<text x="7.2" y="39" font-size="17" fill="#8e5bb5" stroke="#8e5bb5">Z</text>
<text x="7.2" y="83.6" font-size="17" fill="#8e5bb5" stroke="#8e5bb5">Z</text>
<text x="7.1" y="99.6" font-size="18.6" fill="#3f7cc0" stroke="#3f7cc0">A</text>
</g>
<path d="M26.6 11.3v27M21.6 33l5 5.6 5-5.6" fill="none" stroke="#6a6a6a" stroke-width="1.5"/>
<path d="M26.6 71.3v27M21.6 93l5 5.6 5-5.6" fill="none" stroke="#6a6a6a" stroke-width="1.5"/>
</svg>
<svg class="r" style="left:700px;top:248px;" width="60" height="55" viewBox="0 0 60 55">
<rect x="2.8" y="2.6" width="53.6" height="47.4" fill="#fff" stroke="#7a7a7a" stroke-width="1.2"/>
<rect x="2.2" y="2.6" width="54.2" height="7.6" fill="#4a80bb"/>
<path d="M29.2 10v40" stroke="#7a7a7a" stroke-width="1.2"/>
<g font-family="Liberation Sans" stroke-width=".55">
<text x="10" y="26.3" font-size="17" fill="#8e5bb5" stroke="#8e5bb5">Z</text>
<text x="9.6" y="43.8" font-size="18.6" fill="#3f7cc0" stroke="#3f7cc0">A</text>
<text x="35.6" y="26.3" font-size="18.6" fill="#3f7cc0" stroke="#3f7cc0">A</text>
<text x="36.2" y="43.8" font-size="17" fill="#8e5bb5" stroke="#8e5bb5">Z</text>
</g>
</svg>
<div class="t" style="left:710.06px;top:314.00px;font-size:19px;line-height:21px;color:#333;font-family:'Liberation Sans', sans-serif;font-weight:400;transform:scaleX(1.0940);transform-origin:0 0;">Sort</div>
<div class="r" style="left:688.3px;top:236.3px;width:73.7px;height:122.3px;background:transparent;border:3.5px solid #ff0000;box-sizing:border-box;box-shadow:2px 2px 4px rgba(0,0,0,.35), inset 2px 2px 4px rgba(0,0,0,.35);"></div>
<div class="r badge" style="left:463.6px;top:10.5px;width:45.5px;height:45.5px;"></div>
<div class="t" style="left:478.91px;top:18.00px;font-size:27px;line-height:30px;color:#fff;font-family:'Liberation Sans', sans-serif;font-weight:400;">2</div>
<div class="r badge" style="left:571.6px;top:112.9px;width:45.5px;height:45.5px;"></div>
<div class="t" style="left:586.91px;top:120.00px;font-size:27px;line-height:30px;color:#fff;font-family:'Liberation Sans', sans-serif;font-weight:400;">3</div>
<div class="r badge" style="left:227.1px;top:364.9px;width:45.5px;height:45.5px;"></div>
<svg class="r" style="left:243.9px;top:377.2px;" width="12" height="20" viewBox="0 0 12 20"><path d="M4.2 0h2.9v19h-3.1V3.9Q2.4 5.1 0 5.9V3.7Q2.8 2.6 4.2 0z" fill="#fff"/></svg>
<div class="r badge" style="left:716.6px;top:371.9px;width:45.5px;height:45.5px;"></div>
<div class="t" style="left:732.04px;top:379.00px;font-size:27px;line-height:30px;color:#fff;font-family:'Liberation Sans', sans-serif;font-weight:400;">4</div>
</body></html>
